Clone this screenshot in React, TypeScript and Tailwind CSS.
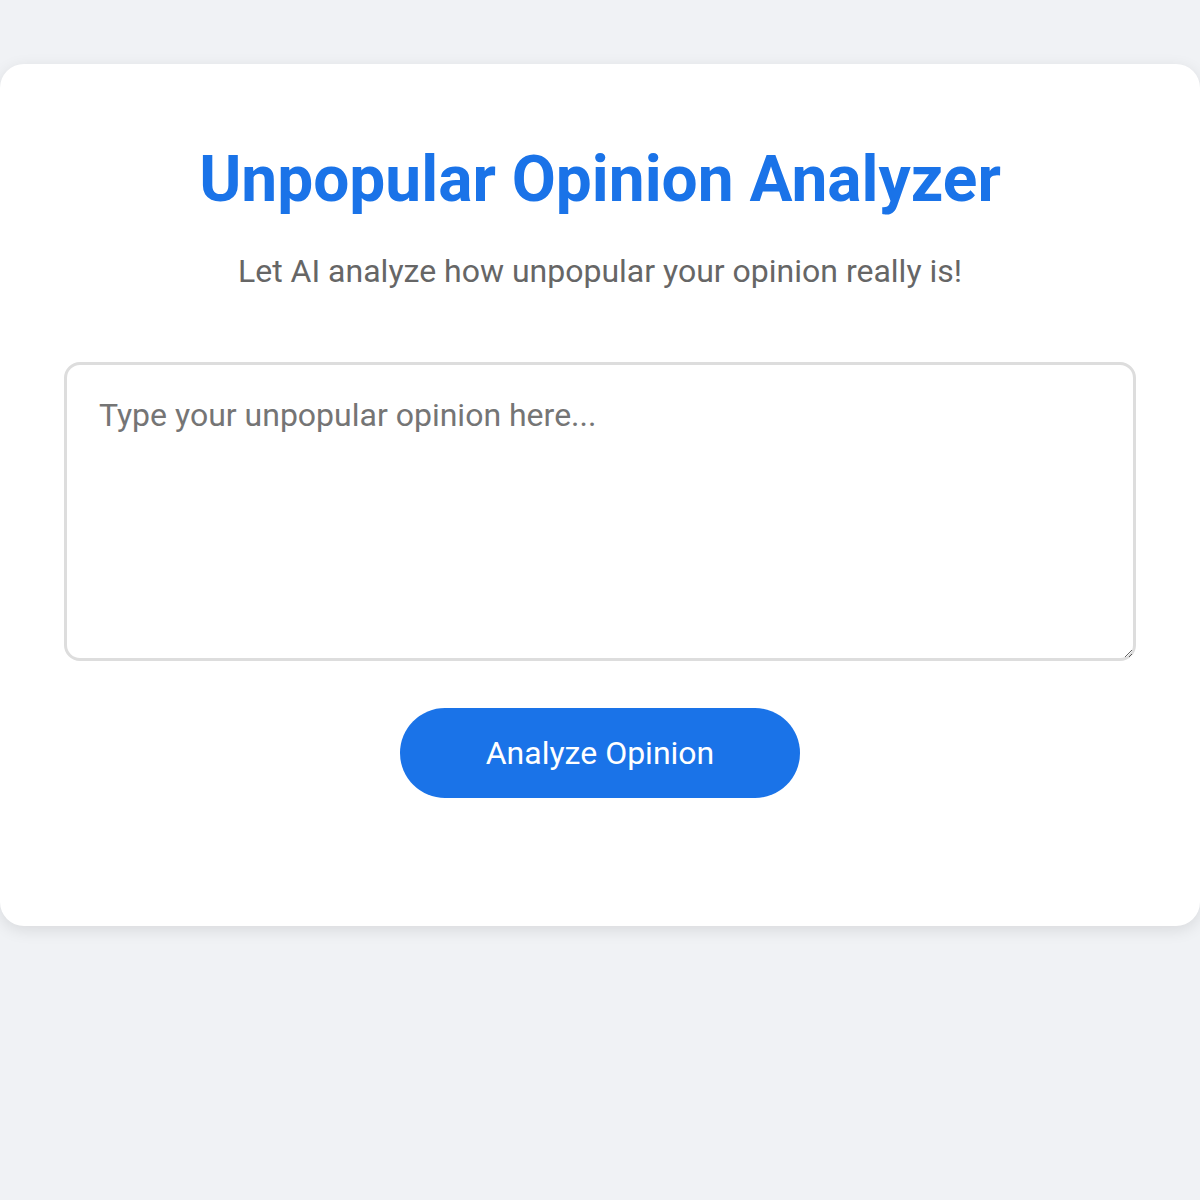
export default function App() {
  return (
    <main
      className="min-h-screen bg-[#f0f2f5] pt-16"
      style={{ fontFamily: "Roboto, 'Liberation Sans', sans-serif" }}
    >
      <div className="rounded-3xl bg-white px-16 pt-[78px] pb-32 text-center shadow-[0_4px_16px_rgba(0,0,0,0.1)]">
        <h1 className="text-[64px] font-bold leading-[1.2] text-[#1a73e8]">
          Unpopular Opinion Analyzer
        </h1>
        <p className="mt-[33px] text-[32px] leading-[1.2] text-[#666]">
          Let AI analyze how unpopular your opinion really is!
        </p>
        <textarea
          className="mt-[72px] block h-[299px] w-full rounded-2xl border-[3px] border-[#ddd] bg-white px-8 pt-[31px] pb-6 text-[32px] leading-[1.2] text-[#333] placeholder:text-[#757575] focus:outline-none"
          placeholder="Type your unpopular opinion here..."
        />
        <button className="mx-auto mt-[47px] block h-[90px] w-[400px] rounded-full bg-[#1a73e8] text-[32px] text-white">
          Analyze Opinion
        </button>
      </div>
    </main>
  );
}
